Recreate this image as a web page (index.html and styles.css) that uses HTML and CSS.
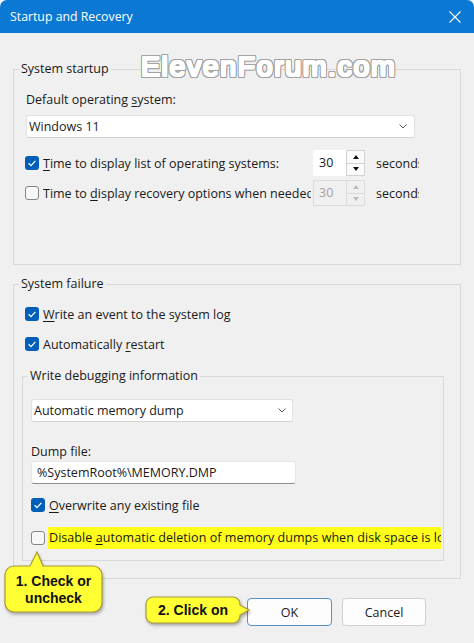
FILE: index.html
```html
<!DOCTYPE html>
<html lang="en">
<head>
<meta charset="utf-8">
<title>Startup and Recovery</title>
<link rel="stylesheet" href="styles.css">
</head>
<body>
<div class="window">
  <div class="titlebar">
    <span class="title">Startup and Recovery</span>
    <svg class="close" viewBox="0 0 12 12" width="12" height="12"><path d="M0.5 0.5 L11.5 11.5 M11.5 0.5 L0.5 11.5" stroke="#fff" stroke-width="1.1" fill="none"/></svg>
  </div>
  <div class="content">
    <fieldset class="group g1">
      <legend>System startup</legend>
      <div class="gbody g1body">
        <div class="label">Default operating <u>s</u>ystem:</div>
        <div class="combo combo1">
          <span>Windows 11</span>
          <svg class="chev" viewBox="0 0 8 5" width="8" height="5"><path d="M0.5 0.5 L4 4 L7.5 0.5" stroke="#5a5a5a" stroke-width="1" fill="none"/></svg>
        </div>
        <div class="row spinrow r1">
          <span class="cb on"><svg viewBox="0 0 14 14" width="14" height="14"><path d="M3.6 7.3 L6 9.6 L10.4 4.9" stroke="#fff" stroke-width="1.3" fill="none"/></svg></span>
          <span class="rtext"><u>T</u>ime to display list of operating systems:</span>
          <div class="spin">
            <span class="field">30</span>
            <span class="btns">
              <span class="sb"><svg viewBox="0 0 6 4" width="6" height="4"><path d="M0 4 L3 0 L6 4 Z" fill="#111"/></svg></span>
              <span class="sb"><svg viewBox="0 0 6 4" width="6" height="4"><path d="M0 0 L3 4 L6 0 Z" fill="#111"/></svg></span>
            </span>
          </div>
          <span class="secs">seconds</span>
        </div>
        <div class="row spinrow r2">
          <span class="cb off"></span>
          <span class="rtext">Time to <u>d</u>isplay recovery options when needed:</span>
          <div class="spin disabled">
            <span class="field">30</span>
            <span class="btns">
              <span class="sb"><svg viewBox="0 0 6 4" width="6" height="4"><path d="M0 4 L3 0 L6 4 Z" fill="#bdbdbd"/></svg></span>
              <span class="sb"><svg viewBox="0 0 6 4" width="6" height="4"><path d="M0 0 L3 4 L6 0 Z" fill="#bdbdbd"/></svg></span>
            </span>
          </div>
          <span class="secs">seconds</span>
        </div>
      </div>
    </fieldset>

    <fieldset class="group g2">
      <legend>System failure</legend>
      <div class="gbody g2body">
        <div class="row crow">
          <span class="cb on"><svg viewBox="0 0 14 14" width="14" height="14"><path d="M3.6 7.3 L6 9.6 L10.4 4.9" stroke="#fff" stroke-width="1.3" fill="none"/></svg></span>
          <span><u>W</u>rite an event to the system log</span>
        </div>
        <div class="row crow restart">
          <span class="cb on"><svg viewBox="0 0 14 14" width="14" height="14"><path d="M3.6 7.3 L6 9.6 L10.4 4.9" stroke="#fff" stroke-width="1.3" fill="none"/></svg></span>
          <span>Automatically <u>r</u>estart</span>
        </div>
        <fieldset class="group g3">
          <legend>Write debugging information</legend>
          <div class="gbody g3body">
            <div class="combo combo2">
              <span>Automatic memory dump</span>
              <svg class="chev" viewBox="0 0 8 5" width="8" height="5"><path d="M0.5 0.5 L4 4 L7.5 0.5" stroke="#5a5a5a" stroke-width="1" fill="none"/></svg>
            </div>
            <div class="label dumplabel">Dump file:</div>
            <div class="textbox">%SystemRoot%\MEMORY.DMP</div>
            <div class="row crow overwrite">
              <span class="cb on"><svg viewBox="0 0 14 14" width="14" height="14"><path d="M3.6 7.3 L6 9.6 L10.4 4.9" stroke="#fff" stroke-width="1.3" fill="none"/></svg></span>
              <span><u>O</u>verwrite any existing file</span>
            </div>
            <div class="row disable">
              <span class="cb off"></span>
              <span class="hl">Disable <u>a</u>utomatic deletion of memory dumps when disk space is low</span>
            </div>
          </div>
        </fieldset>
      </div>
    </fieldset>

    <div class="buttons">
      <span class="btn default">OK</span>
      <span class="btn cancel">Cancel</span>
    </div>
  </div>

  <div class="watermark">ElevenForum.com</div>

  <div class="callout c1">
    <svg class="bubble" viewBox="-1 -1 100 64" width="100" height="64"><path d="M9 14 H25 L32 0 L38 14 H88 A9 9 0 0 1 97 23 V51 A9 9 0 0 1 88 60 H9 A9 9 0 0 1 0 51 V23 A9 9 0 0 1 9 14 Z" fill="#ffff33" stroke="#a89a3c" stroke-width="1.2"/></svg>
    <div class="ctext">1. Check or<br>uncheck</div>
  </div>
  <div class="callout c2">
    <svg class="bubble" viewBox="-1 -1 106 30" width="106" height="30"><path d="M7 1 H87 A7 7 0 0 1 94 8 V9 L103 14 L94 19 V20 A7 7 0 0 1 87 27 H7 A7 7 0 0 1 0 20 V8 A7 7 0 0 1 7 1 Z" fill="#ffff33" stroke="#a89a3c" stroke-width="1.2"/></svg>
    <div class="ctext">2. Click on</div>
  </div>
</div>
</body>
</html>
```

FILE: styles.css
```css
* { box-sizing: border-box; }
html, body { margin: 0; padding: 0; }
body {
  background: #f4f6f8;
  font-family: "Open Sans", "Noto Sans", sans-serif;
  font-size: 12.5px;
  color: #1a1a1a;
}
u { text-decoration-thickness: 1px; text-underline-offset: 2px; }

.window {
  position: relative;
  width: 474px;
  height: 643px;
  background: #f0f0f0;
  overflow: hidden;
  border-radius: 7px 7px 0 0;
}

.titlebar {
  height: 33px;
  background: #0b78d4;
  color: #fff;
  display: flex;
  align-items: center;
  justify-content: space-between;
  padding: 0 13px 0 10px;
}
.title { line-height: 16px; font-size: 12.3px; }
.close { display: block; }

.content { padding: 28px 13px 0 13px; }

fieldset.group {
  margin: 0;
  padding: 0;
  border: 1px solid #d9d9d9;
  min-width: 0;
}
legend {
  margin-left: 5px;
  padding: 0 2px;
  line-height: 16px;
}

.g1body { padding: 14px 0 58px 12px; }
.label { line-height: 18px; height: 18px; }

.combo {
  display: flex;
  align-items: center;
  justify-content: space-between;
  height: 23px;
  background: #fff;
  border: 1px solid #e1e1e1;
  border-bottom-color: #d2d2d2;
  border-radius: 3px;
  padding: 0 7px 0 2px;
}
.combo1 { width: 389px; margin-top: 6px; }
.chev { display: block; }

.row { display: flex; align-items: center; height: 20px; }
.cb {
  width: 14px;
  height: 14px;
  border-radius: 3px;
  flex: none;
  margin-right: 4px;
}
.cb svg { display: block; }
.cb.on { background: #005fb8; }
.cb.off { border: 1px solid #868686; background: #f7f7f7; }

.spinrow { height: 26px; margin-left: -1px; }
.r1 { margin-top: 12px; }
.r2 { margin-top: 4px; }
.rtext { width: 268px; overflow: hidden; white-space: nowrap; flex: none; }

.spin {
  display: flex;
  width: 52px;
  height: 26px;
  margin-left: 2px;
  flex: none;
}
.spin .field {
  width: 33px;
  background: #fff;
  line-height: 26px;
  padding-left: 6px;
}
.spin .btns {
  width: 19px;
  display: flex;
  flex-direction: column;
  border: 1px solid #d3d3d3;
  background: #fafafa;
}
.spin .sb {
  flex: 1;
  display: flex;
  align-items: center;
  justify-content: center;
}
.spin .sb + .sb { border-top: 1px solid #d3d3d3; }
.spin.disabled .field {
  background: #f0f0f0;
  color: #a3a3a3;
  border: 1px solid #dcdcdc;
  border-right: none;
  line-height: 24px;
  padding-left: 5px;
}
.spin.disabled .btns { background: #f0f0f0; border-color: #dcdcdc; }
.spin.disabled .sb + .sb { border-top-color: #dcdcdc; }

.secs { margin-left: 11px; width: 43px; overflow: hidden; white-space: nowrap; flex: none; }

fieldset.g2 { margin-top: 11px; }
.g2body { padding: 12px 16px 17px 11px; }
.restart { margin-top: 10px; }

fieldset.g3 { margin-top: 14px; margin-left: -3px; }
.g3body { padding: 15px 0 11px 8px; }
.combo2 { width: 262px; padding-right: 6px; }
.dumplabel { margin-top: 21px; }
.textbox {
  width: 265px;
  height: 23px;
  background: #fff;
  border: 1px solid #e6e6e6;
  border-bottom: 1px solid #8f8f8f;
  border-radius: 3px;
  padding-left: 5px;
  line-height: 21px;
}
.overwrite { margin-top: 11px; }
.disable { margin-top: 12px; height: 22px; }
.disable .cb { margin-right: 3px; }
.hl {
  display: block;
  width: 393px;
  height: 22px;
  line-height: 22px;
  background: #ffff1a;
  overflow: hidden;
  white-space: nowrap;
  padding-left: 1px;
  letter-spacing: 0.06px;
}

.buttons {
  display: flex;
  justify-content: flex-end;
  gap: 10px;
  margin-top: 19px;
  padding-right: 35px;
}
.btn {
  display: flex;
  align-items: center;
  justify-content: center;
  height: 28px;
  width: 85px;
  background: #fdfdfd;
  border: 1px solid #d0d0d0;
  border-radius: 4px;
}
.btn.default { border-color: #5590c8; }
.btn.cancel { width: 84px; }

.watermark {
  position: absolute;
  left: 141px;
  top: 52px;
  font-family: "Liberation Sans", Arial, sans-serif;
  font-size: 28.5px;
  line-height: 29px;
  letter-spacing: 1.6px;
  color: #fff;
  text-shadow:
    1px 0 0 #fff, -1px 0 0 #fff, 0 1px 0 #fff, 0 -1px 0 #fff,
    1px 1px 0 #fff, -1px -1px 0 #fff, 1px -1px 0 #fff, -1px 1px 0 #fff,
    2px 0 0 #a3a3a3, -2px 0 0 #a3a3a3, 0 2px 0 #a3a3a3, 0 -2px 0 #a3a3a3,
    2px 1px 0 #a3a3a3, -2px 1px 0 #a3a3a3, 2px -1px 0 #a3a3a3, -2px -1px 0 #a3a3a3,
    1px 2px 0 #a3a3a3, -1px 2px 0 #a3a3a3, 1px -2px 0 #a3a3a3, -1px -2px 0 #a3a3a3,
    2px 2px 0 #a3a3a3, -2px -2px 0 #a3a3a3, 2px -2px 0 #a3a3a3, -2px 2px 0 #a3a3a3;
  white-space: nowrap;
}

.callout {
  position: absolute;
  font-family: "Liberation Sans", Arial, sans-serif;
  font-weight: bold;
  font-size: 14px;
  line-height: 17px;
  color: #111;
  text-align: center;
}
.callout .bubble {
  position: absolute;
  left: -1px;
  top: -1px;
  display: block;
  filter: drop-shadow(1px 2px 1.5px rgba(0, 0, 0, 0.3));
}
.callout .ctext { position: relative; }
.c1 { left: 5px; top: 552px; width: 97px; height: 60px; }
.c1 .ctext { padding-top: 21px; }
.c2 { left: 146px; top: 596px; width: 94px; height: 28px; }
.c2 .ctext { padding-top: 6px; }
```
